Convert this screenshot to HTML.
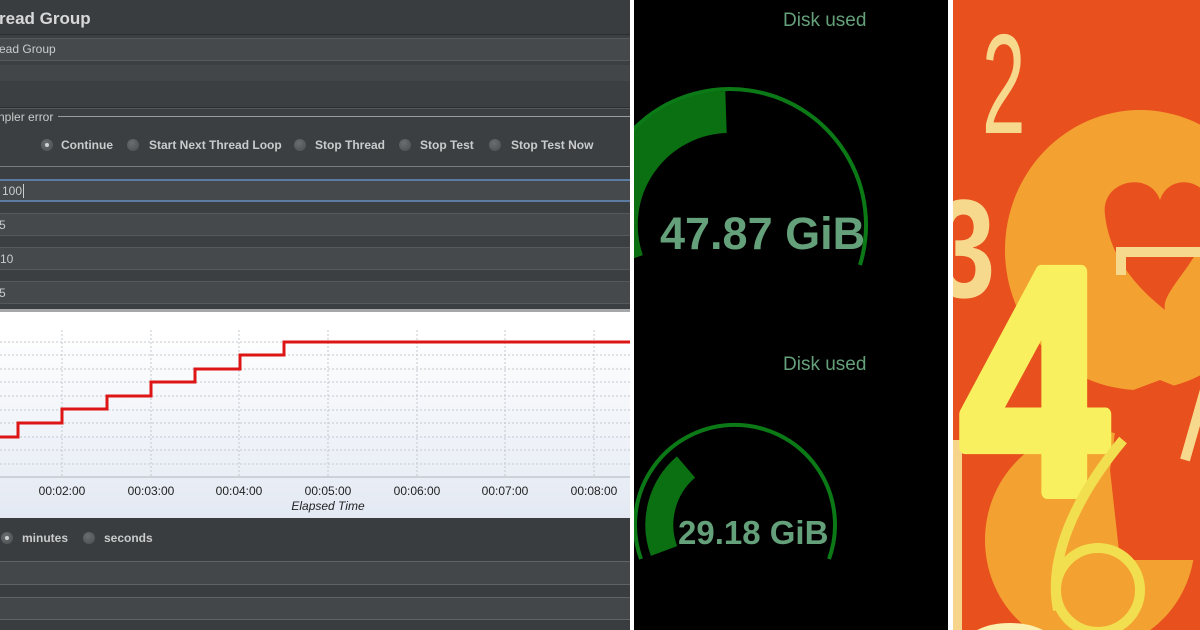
<!DOCTYPE html>
<html><head><meta charset="utf-8"><style>
*{margin:0;padding:0;box-sizing:border-box}
html,body{width:1200px;height:630px;overflow:hidden}
body{background:#fff;position:relative;font-family:"Liberation Sans",sans-serif}
.a{position:absolute}
#L{left:0;top:0;width:630px;height:630px;background:#3c3f41;overflow:hidden}
.t{position:absolute;color:#c9cbcc;font-size:12px;white-space:nowrap}
.b{font-weight:bold}
.rd{position:absolute;width:12px;height:12px;border-radius:50%;background:radial-gradient(circle at 40% 35%,#6a6d70,#4a4d50);}
.rd.on::after{content:"";position:absolute;left:4px;top:4px;width:4px;height:4px;border-radius:50%;background:#d0d0d0}
.ln{position:absolute;left:0;width:630px;height:1px;background:#5c6063}
.fld{position:absolute;left:0;width:630px;background:#45494b;border-top:1px solid #55595c;border-bottom:1px solid #55595c}
</style></head><body>
<div id="L">
 <div class="a" style="left:0;top:0;width:630px;height:35px;background:#3a3d3f"></div>
 <div class="t b" style="left:-1px;top:9px;font-size:17px;color:#d6d8d9">read Group</div>
 <div class="ln" style="top:34px;background:#2c2e30"></div>
 <div class="fld" style="top:38px;height:23px"></div>
 <div class="t" style="left:-1px;top:42px">ead Group</div>
 <div class="a" style="left:0;top:65px;width:630px;height:16px;background:#434648"></div>
 <div class="ln" style="top:107px;background:#2c2e30"></div>
 <div class="ln" style="top:108px;background:#55595c"></div>
 <div class="t" style="left:-2px;top:110px">npler error</div>
 <div class="a" style="left:58px;top:116px;width:572px;height:1px;background:#9a9c9e"></div>
 <div class="rd on" style="left:41px;top:139px"></div><div class="t b" style="left:61px;top:138px">Continue</div>
 <div class="rd" style="left:127px;top:139px"></div><div class="t b" style="left:149px;top:138px">Start Next Thread Loop</div>
 <div class="rd" style="left:294px;top:139px"></div><div class="t b" style="left:315px;top:138px">Stop Thread</div>
 <div class="rd" style="left:399px;top:139px"></div><div class="t b" style="left:420px;top:138px">Stop Test</div>
 <div class="rd" style="left:489px;top:139px"></div><div class="t b" style="left:511px;top:138px">Stop Test Now</div>
 <div class="ln" style="top:166px;background:#7a7d80"></div>
 <div class="fld" style="top:179px;height:23px;border-color:#5b7ba3;border-width:2px 0"></div>
 <div class="t" style="left:2px;top:184px">100<span style="border-left:1px solid #ccc;margin-left:1px"></span></div>
 <div class="fld" style="top:213px;height:23px"></div><div class="t" style="left:-1px;top:218px">5</div>
 <div class="fld" style="top:247px;height:23px"></div><div class="t" style="left:0px;top:252px">10</div>
 <div class="fld" style="top:281px;height:23px"></div><div class="t" style="left:-1px;top:286px">5</div>
 <div class="a" style="left:0;top:309px;width:630px;height:3px;background:#a5a7a9"></div>
 <div class="a" style="left:0;top:312px;width:630px;height:206px;background:linear-gradient(#fff,#fff 10%,#e3e9f3)"></div>
 <svg class="a" style="left:0;top:312px" width="630" height="206">
  <g stroke="#c4c8cf" stroke-width="1" stroke-dasharray="2,2">
   <line x1="0" y1="30" x2="630" y2="30"/><line x1="0" y1="43" x2="630" y2="43"/><line x1="0" y1="57" x2="630" y2="57"/><line x1="0" y1="70" x2="630" y2="70"/><line x1="0" y1="84" x2="630" y2="84"/><line x1="0" y1="98" x2="630" y2="98"/><line x1="0" y1="111" x2="630" y2="111"/><line x1="0" y1="125" x2="630" y2="125"/><line x1="0" y1="138" x2="630" y2="138"/><line x1="0" y1="152" x2="630" y2="152"/>
   <line x1="62" y1="18" x2="62" y2="165"/><line x1="151" y1="18" x2="151" y2="165"/><line x1="239" y1="18" x2="239" y2="165"/><line x1="328" y1="18" x2="328" y2="165"/><line x1="417" y1="18" x2="417" y2="165"/><line x1="505" y1="18" x2="505" y2="165"/><line x1="594" y1="18" x2="594" y2="165"/>
  </g>
  <line x1="0" y1="165" x2="630" y2="165" stroke="#b0b4ba"/>
  <polyline fill="none" stroke="#dd1515" stroke-width="3" points="0,125 18,125 18,111 62,111 62,97 107,97 107,84 151,84 151,70 195,70 195,57 240,57 240,43 284,43 284,30 630,30"/>
  <g font-family="Liberation Sans" font-size="12" fill="#222" text-anchor="middle">
   <text x="62" y="183">00:02:00</text><text x="151" y="183">00:03:00</text><text x="239" y="183">00:04:00</text><text x="328" y="183">00:05:00</text><text x="417" y="183">00:06:00</text><text x="505" y="183">00:07:00</text><text x="594" y="183">00:08:00</text>
   <text x="328" y="198" font-style="italic">Elapsed Time</text>
  </g>
 </svg>
 <div class="a" style="left:0;top:518px;width:630px;height:112px;background:#3a3d3f"></div>
 <div class="rd on" style="left:1px;top:532px"></div><div class="t b" style="left:22px;top:531px">minutes</div>
 <div class="rd" style="left:83px;top:532px"></div><div class="t b" style="left:104px;top:531px">seconds</div>
 <div class="fld" style="top:561px;height:24px;background:#444749;border-color:#606366"></div>
 <div class="fld" style="top:597px;height:23px;background:#444749;border-color:#606366"></div>
</div>
<div class="a" style="left:634px;top:0;width:314px;height:630px;background:#000;overflow:hidden">
 <svg width="314" height="630">
  <g transform="translate(-634,0)">
   <path d="M 594 225 A 136 136 0 1 1 860 265" fill="none" stroke="#0b7a16" stroke-width="4"/>
   <path d="M 623 262 A 113 113 0 0 1 726 112" fill="none" stroke="#0a7012" stroke-width="42"/>
   <path d="M 641 559 A 100 100 0 1 1 829 559" fill="none" stroke="#0b7a16" stroke-width="4"/>
   <path d="M 664 551 A 76 76 0 0 1 686 467" fill="none" stroke="#0a7012" stroke-width="28"/>
  </g>
  <g font-family="Liberation Sans" fill="#64a07a">
   <text x="149" y="26" font-size="19">Disk used</text>
   <text x="149" y="370" font-size="19">Disk used</text>
   <text x="26" y="249" font-size="45" font-weight="bold">47.87 GiB</text>
   <text x="44" y="544" font-size="33" font-weight="bold">29.18 GiB</text>
  </g>
 </svg>
</div>
<div class="a" style="left:953px;top:0;width:247px;height:630px;background:#e8501e;overflow:hidden">
 <svg width="247" height="630">
  <g transform="translate(-953,0)">
   <ellipse cx="1140" cy="250" rx="135" ry="140" fill="#f3a232"/>
   <ellipse cx="1090" cy="540" rx="105" ry="110" fill="#f3a232"/>
   <path d="M1105 215 C1100 180 1150 170 1160 200 C1170 170 1215 180 1210 215 C1205 260 1160 290 1165 310 C1140 290 1110 260 1105 215Z" fill="#e8501e"/>
   <path d="M1120 395 L1160 380 L1210 400 L1210 560 L1120 560 L1110 470Z" fill="#e8501e"/>
   <rect x="953" y="440" width="9" height="190" fill="#f6d58a"/>
   <ellipse cx="1010" cy="645" rx="45" ry="22" fill="#fbf0b0"/>
  </g>
  <g font-family="Liberation Sans">
   <text x="0" y="0" transform="translate(29,133) scale(0.55,1)" font-size="142" fill="#f7d98e">2</text>
   <text x="0" y="0" transform="translate(-20,297) scale(0.8,1)" font-size="140" font-weight="bold" fill="#f7d98e">3</text>
   <text x="0" y="0" transform="translate(8,492) scale(0.82,1)" font-size="320" font-weight="bold" fill="#f8f05e" stroke="#f8f05e" stroke-width="14" stroke-linejoin="round">4</text>
   <path d="M168 275 L168 252 L250 252" fill="none" stroke="#f7d98e" stroke-width="10"/>
   <path d="M252 390 L232 460" fill="none" stroke="#f7d98e" stroke-width="10"/>
   <path d="M170 440 C120 500 95 560 105 610" fill="none" stroke="#f2df50" stroke-width="10"/>
   <circle cx="145" cy="590" r="42" fill="none" stroke="#f2df50" stroke-width="10"/>
  </g>
 </svg>
</div>
</body></html>
